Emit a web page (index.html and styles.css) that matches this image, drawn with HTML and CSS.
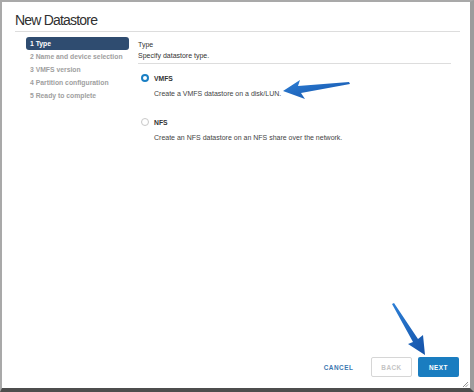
FILE: index.html
```html
<!DOCTYPE html>
<html lang="en">
<head>
  <meta charset="UTF-8" />
  <meta name="viewport" content="width=device-width, initial-scale=1.0"/>
  <title>New Datastore</title>
  <link rel="stylesheet" href="styles.css">
</head>
<body>
  <div class="dialog">
    <header class="dialog-header">
      <h1>New Datastore</h1>
    </header>

    <div class="dialog-body">
      <ul class="steps">
        <li class="active">1 Type</li>
        <li>2 Name and device selection</li>
        <li>3 VMFS version</li>
        <li>4 Partition configuration</li>
        <li>5 Ready to complete</li>
      </ul>

      <section class="page">
        <h2>Type</h2>
        <p class="subtitle">Specify datastore type.</p>

        <div class="option">
          <span class="radio checked"></span>
          <span class="option-name">VMFS</span>
        </div>
        <p class="option-desc">Create a VMFS datastore on a disk/LUN.</p>

        <div class="option option-gap">
          <span class="radio"></span>
          <span class="option-name">NFS</span>
        </div>
        <p class="option-desc">Create an NFS datastore on an NFS share over the network.</p>
      </section>
    </div>

    <footer class="dialog-footer">
      <button class="btn btn-link">CANCEL</button>
      <button class="btn btn-outline" disabled>BACK</button>
      <button class="btn btn-primary">NEXT</button>
    </footer>
  </div>

  <!-- annotation arrows drawn over the dialog -->
  <svg class="annotations" width="474" height="392" viewBox="0 0 474 392">
    <defs>
      <linearGradient id="arrowBlue" x1="0" y1="0" x2="1" y2="1">
        <stop offset="0" stop-color="#2d7fd6"/>
        <stop offset="1" stop-color="#1452a8"/>
      </linearGradient>
    </defs>
    <polygon fill="url(#arrowBlue)" points="283,91 300,80 298,86 349,82 350,84 301,93 305,99"/>
    <polygon fill="url(#arrowBlue)" points="392,304 394,303 418,339 423,335 425,355 408,344 413,342"/>
    <g stroke="#777" stroke-width="0.8">
      <line x1="463" y1="387" x2="468" y2="382"/>
      <line x1="465.5" y1="387" x2="468" y2="384.5"/>
    </g>
  </svg>
</body>
</html>
```

FILE: styles.css
```css
body {
  margin: 0;
  background: #a6a6a6;
  font-family: 'Liberation Sans', Arial, sans-serif;
  color: #333;
}

.dialog {
  box-sizing: border-box;
  width: 474px;
  height: 392px;
  display: flex;
  flex-direction: column;
  background: #fff;
  border-top: 2px solid #a9a9a9;
  border-left: 2px solid #a9a9a9;
  border-right: 4px solid #9c9c9c;
  border-bottom: 4px solid #4d4d4d;
}

.dialog-header h1 {
  margin: 0 10px 0 13px;
  padding: 8px 0 1px;
  font-size: 14px;
  line-height: 20px;
  font-weight: normal;
  letter-spacing: -0.8px;
  color: #303030;
  border-bottom: 1px solid #ddd;
}

.dialog-body {
  flex: 1;
  display: flex;
}

.steps {
  list-style: none;
  margin: 5px 0 0 24px;
  padding: 0;
  width: 103px;
}

.steps li {
  height: 13px;
  line-height: 13px;
  padding-left: 4px;
  font-size: 6.8px;
  font-weight: bold;
  color: #a0a0a0;
  white-space: nowrap;
}

.steps li.active {
  background: #2f4c70;
  color: #fff;
  border-radius: 3px;
}

.page {
  flex: 1;
  margin: 7px 19px 0 9px;
}

.page h2 {
  margin: 0;
  font-size: 7px;
  line-height: 11px;
  font-weight: normal;
  color: #333;
}

.subtitle {
  margin: 0;
  padding-bottom: 2px;
  font-size: 7px;
  line-height: 11px;
  border-bottom: 1px solid #ddd;
}

.option {
  display: flex;
  align-items: center;
  gap: 5px;
  margin: 8px 0 0 3px;
  height: 12px;
}

.option-gap {
  margin-top: 17px;
}

.radio {
  box-sizing: border-box;
  width: 8px;
  height: 8px;
  border-radius: 50%;
  border: 1px solid #c8c8c8;
  background: #fff;
}

.radio.checked {
  border: 2.5px solid #1a7fc4;
}

.option-name {
  font-size: 6.8px;
  font-weight: bold;
  color: #333;
}

.option-desc {
  margin: 4px 0 0 16px;
  font-size: 7px;
  line-height: 11px;
  color: #444;
}

.dialog-footer {
  display: flex;
  justify-content: flex-end;
  align-items: center;
  gap: 6px;
  padding: 0 11px 11px 0;
}

.btn {
  box-sizing: border-box;
  width: 41px;
  height: 20px;
  padding: 0;
  font-family: inherit;
  font-size: 6.4px;
  font-weight: bold;
  letter-spacing: 0.5px;
  border-radius: 2px;
  border: 1px solid transparent;
  background: none;
}

.btn-link {
  color: #3d78b0;
  margin-right: 6px;
}

.btn-outline {
  border-color: #d6d6d6;
  color: #c4c4c4;
}

.btn-primary {
  background: #1a7dc0;
  color: #fff;
}

.annotations {
  position: absolute;
  top: 0;
  left: 0;
  pointer-events: none;
}
```
